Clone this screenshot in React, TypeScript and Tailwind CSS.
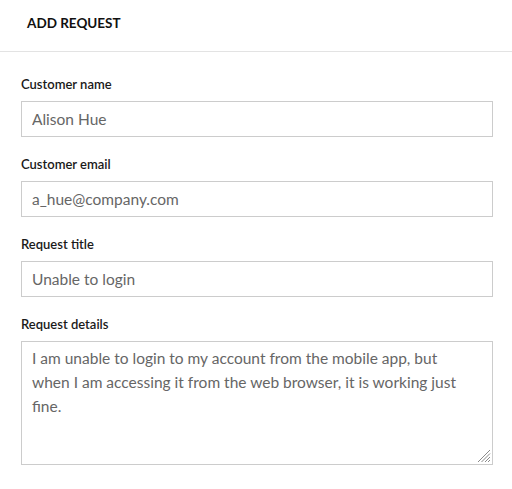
import React from "react";

const font = { fontFamily: "Lato, 'Open Sans', Arial, sans-serif" };

function Field({ label, value }: { label: string; value: string }) {
  return (
    <div className="flex flex-col">
      <label className="h-[18px] text-[13px] leading-[18px] font-semibold text-[#1a1a1a]">{label}</label>
      <input
        readOnly
        defaultValue={value}
        className="mt-2 h-[36px] w-full border border-[#cccccc] px-[10px] text-[15.5px] text-[#666666] outline-none"
        style={font}
      />
    </div>
  );
}

export default function App() {
  return (
    <div className="w-[512px] h-[489px] bg-white" style={font}>
      <div className="h-[52px] border-b border-[#e3e3e3] pl-[27px] pt-[14px]">
        <h1 className="text-[13.5px] leading-[18px] font-bold text-[#111111]">ADD REQUEST</h1>
      </div>
      <div className="flex flex-col gap-[18px] px-[21px] pt-[23px] pr-[19px]">
        <Field label="Customer name" value="Alison Hue" />
        <Field label="Customer email" value="a_hue@company.com" />
        <Field label="Request title" value="Unable to login" />
        <div className="flex flex-col">
          <label className="h-[18px] text-[13px] leading-[18px] font-semibold text-[#1a1a1a]">Request details</label>
          <div className="relative mt-2 h-[124px]">
            <textarea
              readOnly
              defaultValue="I am unable to login to my account from the mobile app, but when I am accessing it from the web browser, it is working just fine."
              className="block h-full w-full resize-none border border-[#cccccc] pl-[10px] pr-[20px] py-[4px] text-[15.5px] leading-[24px] text-[#666666] outline-none"
              style={font}
            />
            <svg className="absolute right-[2px] bottom-[2px]" width="14" height="14" viewBox="0 0 14 14">
              <g stroke="#8a8a8a" strokeWidth="1">
                <line x1="13" y1="1" x2="1" y2="13" />
                <line x1="13" y1="4.5" x2="4.5" y2="13" />
                <line x1="13" y1="8" x2="8" y2="13" />
                <line x1="13" y1="11" x2="11" y2="13" />
              </g>
            </svg>
          </div>
        </div>
      </div>
    </div>
  );
}
